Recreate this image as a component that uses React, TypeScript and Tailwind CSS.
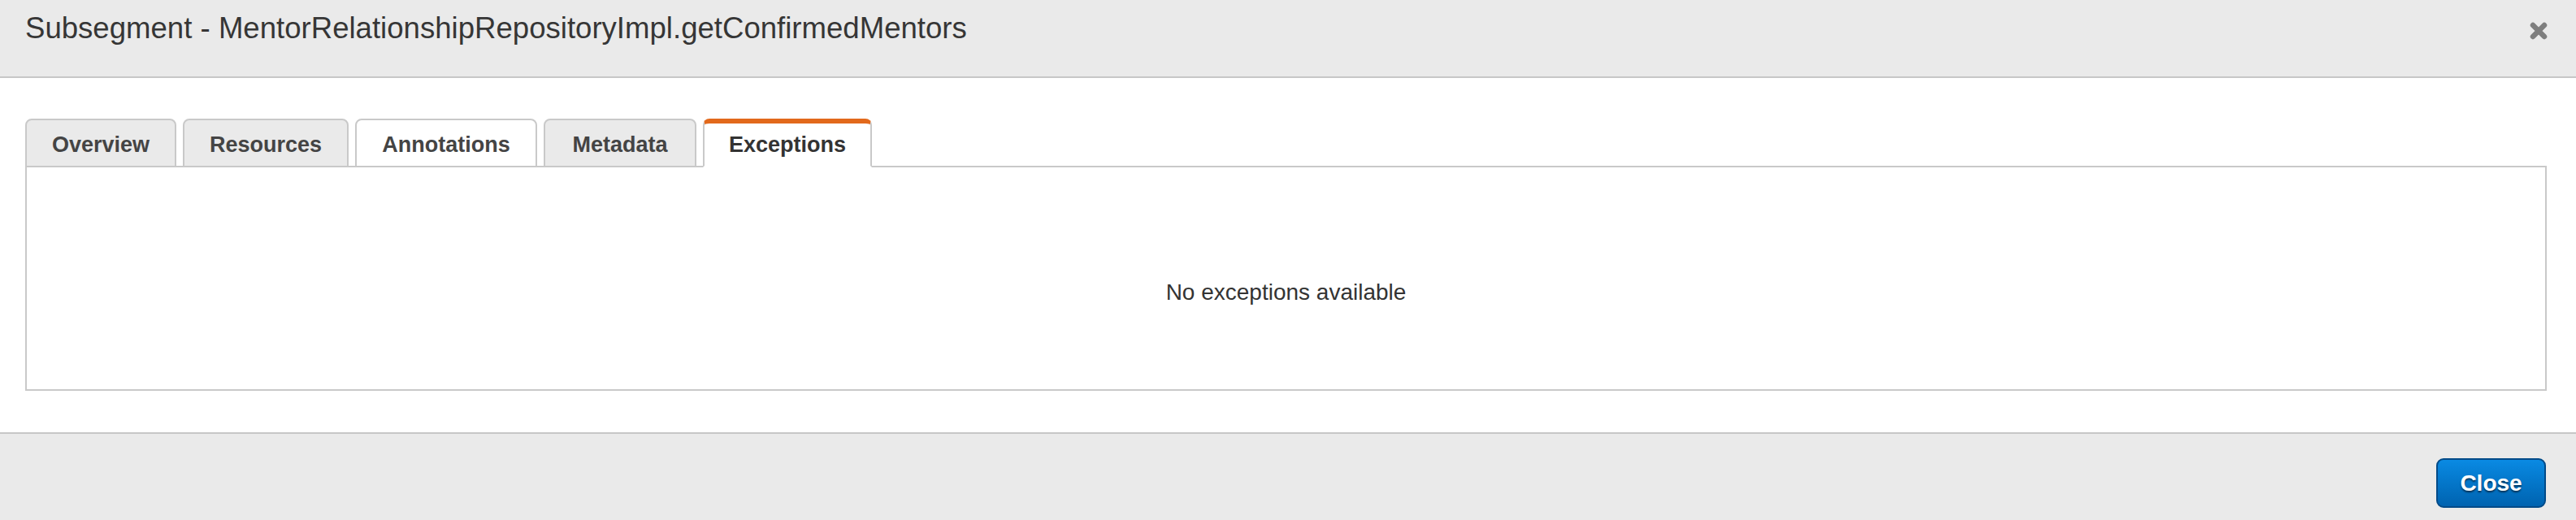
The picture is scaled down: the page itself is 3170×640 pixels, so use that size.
import { useState } from 'react';

const tabs = [
  { id: 'overview', label: 'Overview', width: 'w-[186px]' },
  { id: 'resources', label: 'Resources', width: 'w-[204px]' },
  { id: 'annotations', label: 'Annotations', width: 'w-[224px]' },
  { id: 'metadata', label: 'Metadata', width: 'w-[188px]' },
  { id: 'exceptions', label: 'Exceptions', width: 'w-[208px]' },
];

const CloseIcon = () => (
  <svg width="22" height="22" viewBox="0 0 22 22" aria-hidden="true">
    <path d="M4 4L18 18M18 4L4 18" stroke="#7e7e7e" strokeWidth="6.5" strokeLinecap="round" />
  </svg>
);

const App = () => {
  const [active, setActive] = useState('exceptions');
  // annotations shows the hover state in the capture
  const hovered = 'annotations';

  return (
    <div className="w-[3170px] h-[640px] bg-white font-['Liberation_Sans','Helvetica_Neue',Arial,sans-serif] text-[#333] flex flex-col">
      {/* Header */}
      <div className="h-[96px] shrink-0 bg-[#eaeaea] border-b-2 border-[#c7c7c7] flex items-start justify-between pl-[31px] pr-[35px] pt-[15px]">
        <h4 className="text-[36.6px] leading-[40px] font-normal text-[#363636]">
          Subsegment - MentorRelationshipRepositoryImpl.getConfirmedMentors
        </h4>
        <button className="mt-[12px] w-[22px] h-[22px] flex items-center justify-center">
          <CloseIcon />
        </button>
      </div>

      {/* Body */}
      <div className="flex-1 bg-white pl-[31px] pr-[36px] pt-[50px] pb-[51px]">
        <div className="flex gap-[8px] relative z-10 -mb-[2px]">
          {tabs.map((tab) => {
            const isActive = tab.id === active;
            const isWhite = isActive || tab.id === hovered;
            return (
              <button
                key={tab.id}
                onClick={() => setActive(tab.id)}
                className={`${tab.width} h-[60px] rounded-t-[8px] border-2 text-[27px] leading-[40px] font-bold text-center ${
                  isActive
                    ? 'border-t-[6px] border-t-[#e2691c] border-x-[#c9c9c9] border-b-white bg-white text-[#333] pt-[6px]'
                    : `border-[#c9c9c9] pt-[10px] text-[#444] ${isWhite ? 'bg-white' : 'bg-[#eaeaea]'}`
                } flex justify-center items-start`}
              >
                {tab.label}
              </button>
            );
          })}
        </div>
        <div className="h-[277px] border-2 border-[#c9c9c9] flex justify-center pt-[134px]">
          <p className="text-[28px] leading-[40px] text-[#333]">No exceptions available</p>
        </div>
      </div>

      {/* Footer */}
      <div className="h-[108px] shrink-0 bg-[#eaeaea] border-t-2 border-[#c7c7c7] flex justify-end items-start pt-[30px] pr-[37px]">
        <button className="w-[135px] h-[61px] rounded-[9px] border-2 border-[#004a88] bg-linear-to-b from-[#0a8ae3] to-[#0063b0] text-white text-[28px] font-bold [text-shadow:0_2px_2px_rgba(0,0,0,0.55)]">
          Close
        </button>
      </div>
    </div>
  );
};

export default App;
